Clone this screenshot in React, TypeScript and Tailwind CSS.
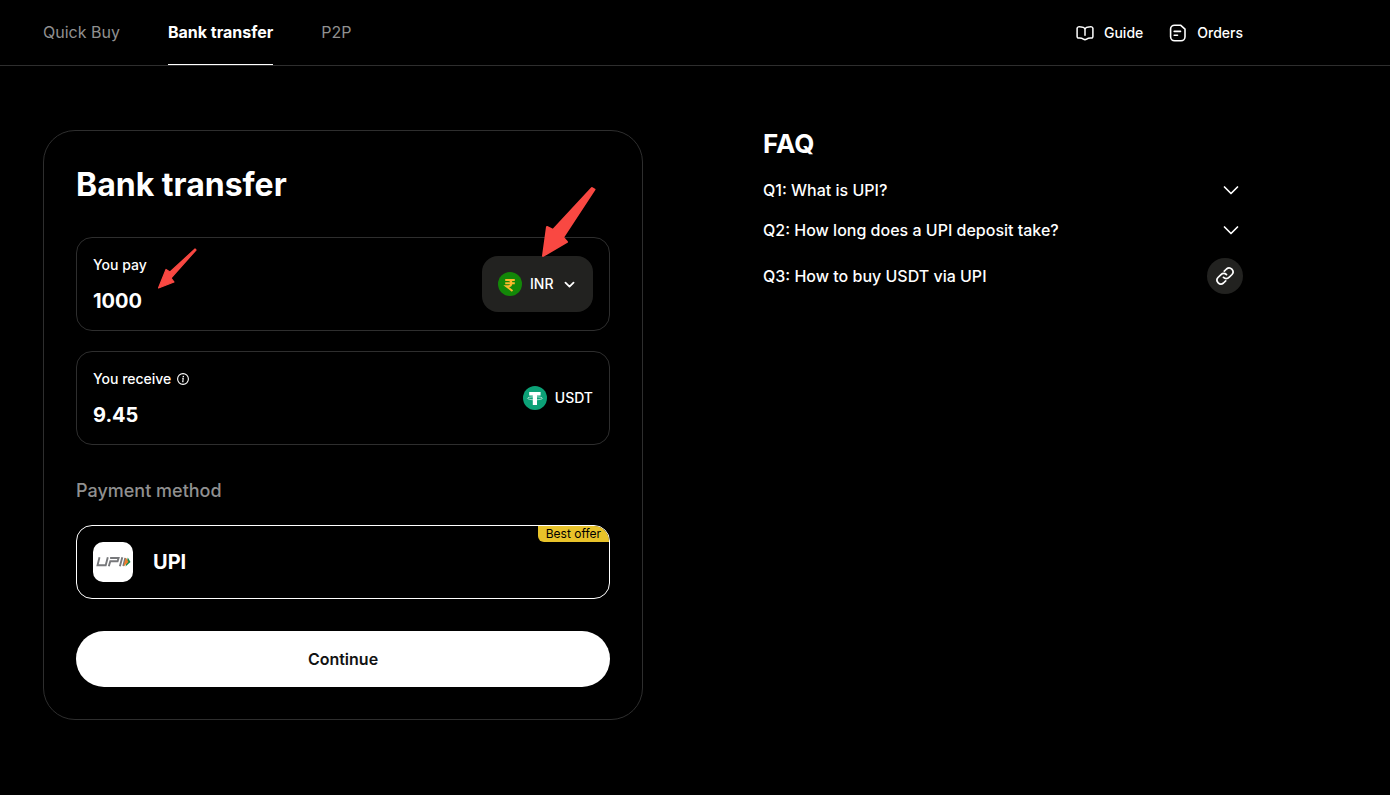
import { useState, type ReactNode } from "react";

const TABS = ["Quick Buy", "Bank transfer", "P2P"];

const FAQ = [
  { q: "Q1: What is UPI?", a: "UPI is an instant payment system for bank accounts in India." },
  { q: "Q2: How long does a UPI deposit take?", a: "Most UPI deposits arrive within a few minutes." },
];

function Chevron({ className, size, width }: { className?: string; size: number; width: number }) {
  return (
    <svg
      className={className}
      width={size}
      height={size}
      viewBox="0 0 24 24"
      fill="none"
      stroke="currentColor"
      strokeWidth={width}
      strokeLinecap="round"
      strokeLinejoin="round"
      aria-hidden="true"
    >
      <path d="m5.500 9 6.500 6.500L18.500 9" />
    </svg>
  );
}

function GuideIcon() {
  return (
    <svg width="18" height="18" viewBox="0 0 18 18" fill="none" stroke="currentColor" strokeWidth="1.5" strokeLinejoin="round" strokeLinecap="round" aria-hidden="true">
      <path d="M9 4.600C7.900 3.200 6.100 2.800 4.600 2.900 3.300 2.400 1.300 2.800 1.100 4.300v8.200c0 1.200.9 1.700 2 1.600 1.700-.1 3.100.2 4.300 1 .9.600 2.300.600 3.200 0 1.200-.8 2.600-1.100 4.300-1 1.100.1 2-.4 2-1.600V4.300c-.2-1.500-2.200-1.900-3.500-1.400-1.500-.1-3.300.3-4.400 1.700Z" />
      <path d="M9 4.600v6.700" />
    </svg>
  );
}

function OrdersIcon() {
  return (
    <svg width="18" height="18" viewBox="0 0 18 18" fill="none" stroke="currentColor" strokeWidth="1.600" strokeLinejoin="round" strokeLinecap="round" aria-hidden="true">
      <path d="M5.500 1.200h6L16 5.200v7.600a4 4 0 0 1-4 4H5.600a4 4 0 0 1-4-4V5.100a3.900 3.900 0 0 1 3.900-3.900Z" />
      <path d="M5.200 7.400h6.300M5.200 11.300h3.300" />
    </svg>
  );
}

function InfoIcon() {
  return (
    <svg width="12" height="12" viewBox="0 0 12 12" fill="none" stroke="currentColor" aria-hidden="true">
      <circle cx="6" cy="6" r="5.400" strokeWidth="1.100" />
      <path d="M5.200 5.300h1L5.800 8.600M5.200 8.600h1.300" strokeWidth="1.100" />
      <circle cx="6.300" cy="3.400" r=".75" fill="currentColor" stroke="none" />
    </svg>
  );
}

function LinkIcon() {
  return (
    <svg width="20" height="20" viewBox="0 0 20 20" fill="none" stroke="currentColor" strokeWidth="1.700" strokeLinecap="round" aria-hidden="true">
      <path d="M9.300 5.200 11.500 3a3.900 3.900 0 0 1 5.500 5.500L14 11.400a3.900 3.900 0 0 1-5.500 0" />
      <path d="M10.700 14.800 8.500 17A3.900 3.900 0 0 1 3 11.500L6 8.600a3.900 3.900 0 0 1 5.500 0" />
    </svg>
  );
}

function RupeeIcon() {
  return (
    <svg width="24" height="24" viewBox="0 0 24 24" fill="none" aria-hidden="true">
      <circle cx="12" cy="12" r="12" fill="#138808" />
      <path d="M7.200 8h9.600M7.200 11.300h9.600M8 8h2.200c2 0 3.200 1.200 3.200 3.100s-1.200 3.200-3.200 3.200H8.300l6.200 4.700" stroke="#fbb92d" strokeWidth="2" />
    </svg>
  );
}

function TetherIcon() {
  return (
    <svg width="24" height="24" viewBox="0 0 24 24" fill="none" aria-hidden="true">
      <circle cx="12" cy="12" r="12" fill="#0ca177" />
      <ellipse cx="12" cy="12.300" rx="7.500" ry="1.500" stroke="#fff" strokeOpacity=".75" strokeWidth=".8" />
      <path d="M6.200 6h11.400v3.400H14V19H9.800V9.400H6.200Z" fill="#fff" />
    </svg>
  );
}

function UpiLogo() {
  return (
    <svg width="40" height="40" viewBox="0 0 40 40" fill="none" aria-hidden="true">
      <path d="M6.500 15.200 4.500 23.300h8.200L14.800 15.200M15.800 24.200l1.500-5h7.300l1-3.200h-8.500M29.300 15.200l-2.400 9M32.300 16l-2 8" stroke="#77787b" strokeWidth="1.900" />
      <path d="m34.800 15.500 2.700 4.500-5 4.500Z" fill="#16864a" />
      <path d="m32.800 15.500 2.700 4.500-5 4.500Z" fill="#ee7c2b" />
    </svg>
  );
}

function AmountBox({ children, side }: { children: ReactNode; side: ReactNode }) {
  return (
    <div className="relative flex h-[94px] items-center justify-between rounded-2xl border border-[#2e2e2e] px-4">
      <div className="flex min-w-0 flex-col gap-3 pt-0.5">{children}</div>
      {side}
    </div>
  );
}

export default function App() {
  const [tab, setTab] = useState("Bank transfer");
  const [amount, setAmount] = useState("1000");
  const [open, setOpen] = useState<number | null>(null);

  return (
    <div className="min-h-screen bg-black font-['Inter',sans-serif] text-white">
      <header className="border-b border-[#2e2e2e] px-[43px]">
        <div className="flex max-w-[1200px] items-center justify-between">
          <nav className="flex gap-12">
            {TABS.map((t) => (
              <button
                key={t}
                type="button"
                onClick={() => setTab(t)}
                className={`h-[65px] border-b text-base ${
                  t === tab ? "border-white font-bold" : "border-transparent text-[#909090]"
                }`}
              >
                {t}
              </button>
            ))}
          </nav>
          <div className="flex gap-[26px] text-sm font-medium">
            <a href="#guide" className="flex items-center gap-2.5">
              <GuideIcon />
              Guide
            </a>
            <a href="#orders" className="flex items-center gap-2.5">
              <OrdersIcon />
              Orders
            </a>
          </div>
        </div>
      </header>

      <main className="px-[43px] py-16">
        <div className="flex max-w-[1200px] items-start justify-between gap-12">
          <section className="w-full max-w-[600px] rounded-[32px] border border-[#2e2e2e] p-8">
            <h1 className="text-[32px] leading-[44px] font-bold">Bank transfer</h1>

            <div className="mt-[30px] flex flex-col gap-5">
              <AmountBox
                side={
                  <div className="flex h-14 shrink-0 items-center gap-2 rounded-2xl bg-[#222220] px-4">
                    <RupeeIcon />
                    <div className="flex items-center gap-2">
                      <select aria-label="Currency" className="appearance-none bg-transparent text-sm font-medium outline-none">
                        <option>INR</option>
                      </select>
                      <Chevron size={15} width={2.8} className="pointer-events-none" />
                    </div>
                  </div>
                }
              >
                <label htmlFor="pay" className="text-sm font-medium">
                  You pay
                </label>
                <input
                  id="pay"
                  inputMode="decimal"
                  value={amount}
                  onChange={(e) => setAmount(e.target.value)}
                  className="h-7 w-full bg-transparent text-xl font-bold outline-none"
                />
                <svg className="pointer-events-none absolute top-[9px] left-[79px]" width="42" height="42" viewBox="0 0 42 42" aria-hidden="true">
                  <path d="M39 2 14 25l-4-2.500L2.500 41l15.500-6-3-4L40 3Z" fill="#f94842" stroke="#f94842" strokeWidth="1.200" strokeLinejoin="round" />
                </svg>
                <svg className="pointer-events-none absolute top-[-53px] right-[13px]" width="56" height="74" viewBox="0 0 56 74" aria-hidden="true">
                  <path d="M52 3 13 45l-6-3L3 71l24-14-4-4.500L54.500 4.500Z" fill="#f94842" stroke="#f94842" strokeWidth="2" strokeLinejoin="round" />
                </svg>
              </AmountBox>

              <AmountBox
                side={
                  <div className="flex items-center gap-2 text-sm font-medium">
                    <TetherIcon />
                    USDT
                  </div>
                }
              >
                <span className="flex items-center gap-1.5 text-sm font-medium">
                  You receive
                  <InfoIcon />
                </span>
                <output className="h-7 text-xl font-bold">9.45</output>
              </AmountBox>
            </div>

            <fieldset>
              <legend className="pt-8 pb-5 text-lg font-medium text-[#909090]">Payment method</legend>
              <label className="relative flex h-[74px] items-center gap-5 overflow-hidden rounded-2xl border border-white px-4 text-xl font-bold">
                <input type="radio" name="method" defaultChecked className="sr-only" />
                <span className="size-10 overflow-hidden rounded-[10px] bg-white">
                  <UpiLogo />
                </span>
                UPI
                <span className="absolute top-0 right-0 rounded-bl-md bg-[#e8c32a] px-2 text-xs font-normal text-black">
                  Best offer
                </span>
              </label>
            </fieldset>

            <button type="button" className="mt-8 h-14 w-full rounded-full bg-white font-semibold text-[#121212]">
              Continue
            </button>
          </section>

          <aside className="w-full max-w-[480px]">
            <h2 className="text-[26px] leading-7 font-bold">FAQ</h2>
            <div className="mt-5 flex flex-col gap-4 font-medium">
              {FAQ.map((f, i) => (
                <div key={f.q}>
                  <button
                    type="button"
                    aria-expanded={open === i}
                    onClick={() => setOpen(open === i ? null : i)}
                    className="flex w-full items-center justify-between text-left"
                  >
                    {f.q}
                    <Chevron size={24} width={1.7} />
                  </button>
                  {open === i && <p className="mt-2 text-sm text-[#909090]">{f.a}</p>}
                </div>
              ))}
              <a href="#buy-usdt" className="flex items-center justify-between">
                Q3: How to buy USDT via UPI
                <span className="flex size-9 items-center justify-center rounded-full bg-[#222220]">
                  <LinkIcon />
                </span>
              </a>
            </div>
          </aside>
        </div>
      </main>
    </div>
  );
}
